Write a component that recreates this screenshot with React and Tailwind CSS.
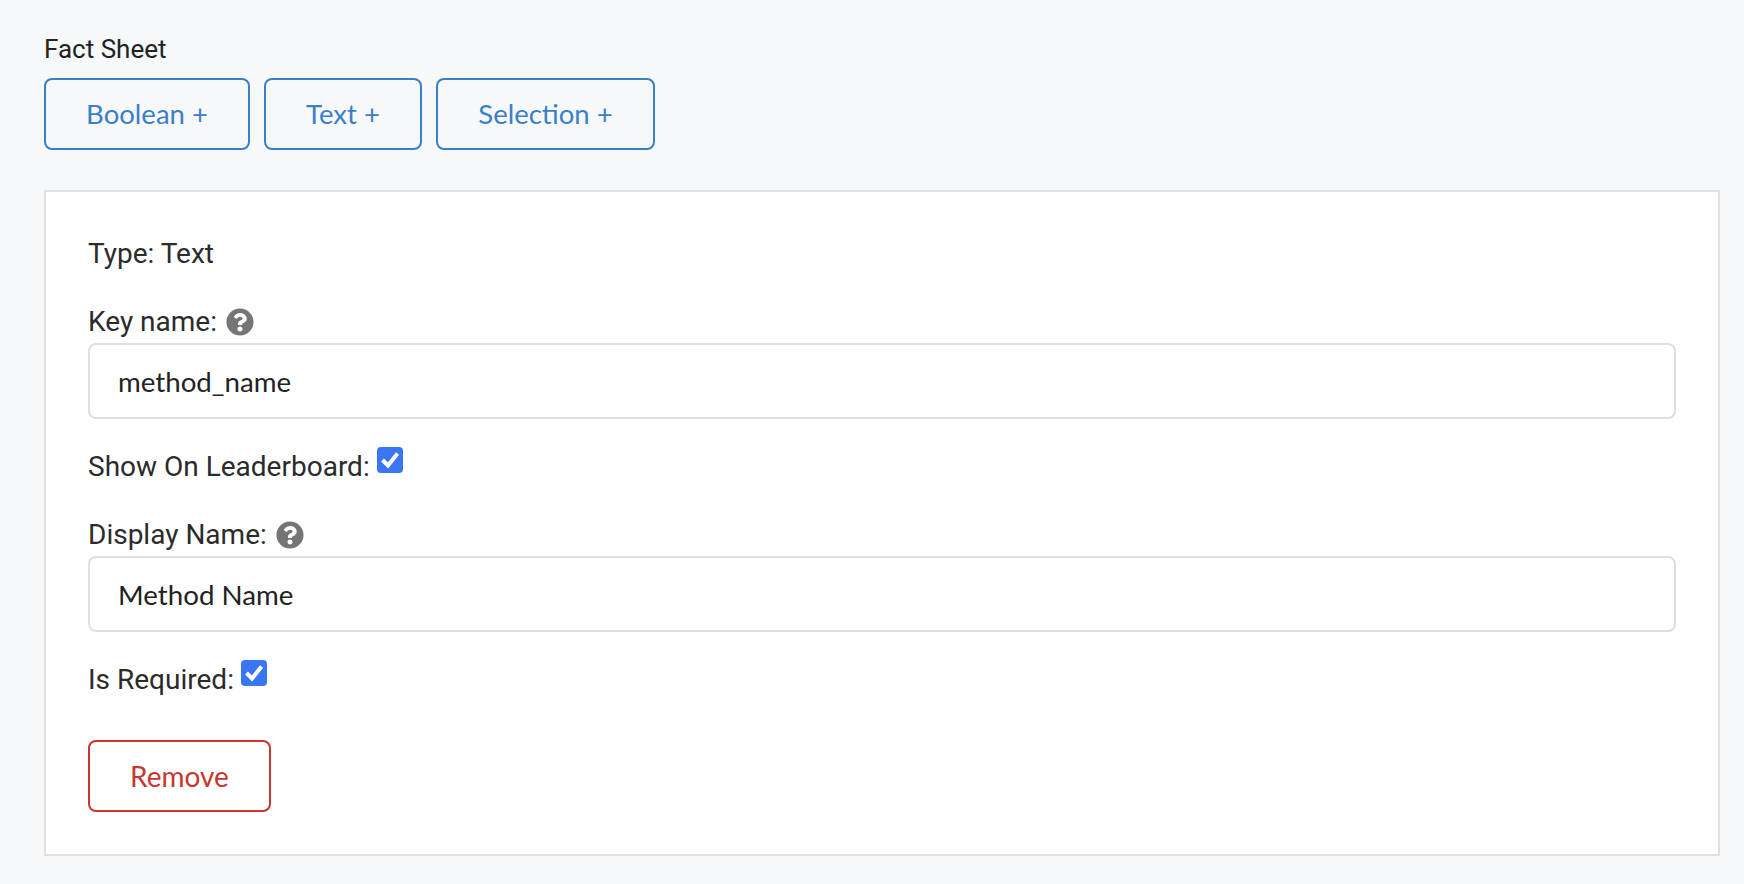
import React from 'react';
import { FaQuestionCircle } from 'react-icons/fa';

const roboto = 'font-["Roboto",sans-serif]';
const lato = 'font-["Lato",sans-serif]';

const AddButton = ({ label, width }) => (
  <button
    className={`h-[72px] rounded-lg border-2 border-[#3c7fc9] text-[27.5px] text-[#3c7fc9] ${lato} ${width}`}
  >
    {label}
  </button>
);

const Checkbox = () => (
  <span className="mb-[11px] ml-[7px] flex h-[26px] w-[26px] items-center justify-center rounded-[4px] bg-[#3a76f2]">
    <svg viewBox="0 0 26 26" className="h-[26px] w-[26px]" fill="none">
      <path d="M5.5 13l5.5 5.5L20.5 6.5" stroke="#fff" strokeWidth="4" />
    </svg>
  </span>
);

const FieldLabel = ({ label, className = '' }) => (
  <div className={`flex h-[34px] items-center pt-[2px] text-[28px] text-[#2b2b2b] ${className}`}>
    {label}
    <FaQuestionCircle className="ml-[9px] h-[28px] w-[28px] text-[#757575]" />
  </div>
);

const TextField = ({ value }) => (
  <input
    defaultValue={value}
    className={`mt-[5px] block h-[76px] w-full rounded-lg border-2 border-[#dfdfdf] bg-white px-[28px] text-[27.7px] text-[#222] outline-none ${lato}`}
  />
);

const CheckRow = ({ label, className = '' }) => (
  <label className={`flex h-[40px] items-end text-[28px] text-[#2b2b2b] ${className}`}>
    <span className="leading-[34px]">{label}</span>
    <Checkbox />
  </label>
);

export default function App() {
  return (
    <div className={`h-[884px] overflow-hidden bg-[#f7f8fa] pl-[44px] pr-[24px] pt-[32px] ${roboto}`}>
      <div className="text-[26px] leading-[34px] text-[#222]">Fact Sheet</div>

      <div className="mt-[12px] flex gap-[14px]">
        <AddButton label="Boolean +" width="w-[206px]" />
        <AddButton label="Text +" width="w-[158px]" />
        <AddButton label="Selection +" width="w-[219px]" />
      </div>

      <section className="mt-[40px] h-[666px] border-2 border-[#e1e1e1] bg-white px-[42px] pt-[45px]">
        <div className="text-[28px] leading-[34px] text-[#2b2b2b]">Type: Text</div>

        <FieldLabel label="Key name:" className="mt-[33px]" />
        <TextField value="method_name" />
        <CheckRow label="Show On Leaderboard:" className="mt-[25px]" />

        <FieldLabel label="Display Name:" className="mt-[33px]" />
        <TextField value="Method Name" />
        <CheckRow label="Is Required:" className="mt-[25px]" />

        <button
          className={`mt-[43px] block h-[72px] w-[183px] rounded-lg border-2 border-[#c8372f] text-[28px] text-[#c8372f] ${lato}`}
        >
          Remove
        </button>
      </section>
    </div>
  );
}
